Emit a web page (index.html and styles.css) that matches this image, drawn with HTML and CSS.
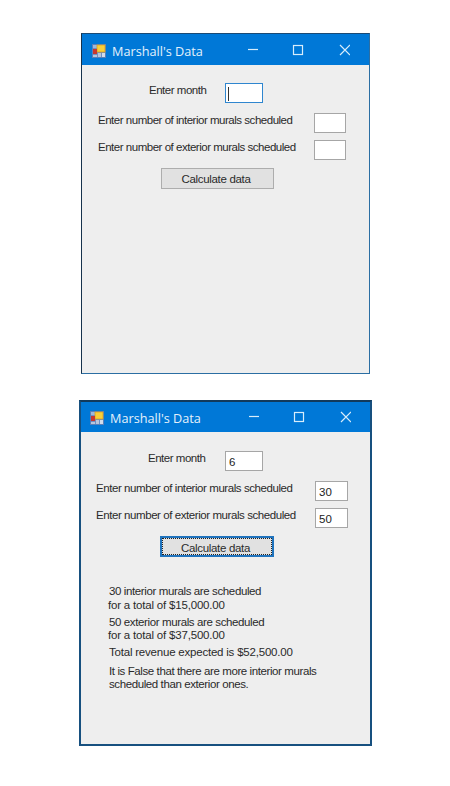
FILE: index.html
```html
<!DOCTYPE html>
<html lang="en">
<head>
<meta charset="utf-8">
<title>Marshall's Data</title>
<link rel="stylesheet" href="styles.css">
</head>
<body>
<section class="window window-empty">
  <header class="titlebar">
    <svg class="app-icon" viewBox="0 0 14 14"><rect x="0.5" y="0.5" width="13" height="13" fill="#6f8fc4" stroke="#5a7fb8"/><rect x="1" y="1" width="4" height="3" fill="#9fb8dc"/><rect x="5" y="1" width="8" height="7" fill="#f9cf3a" stroke="#d59a1b" stroke-width="0.7"/><rect x="1" y="5" width="4" height="5" fill="#c9372f"/><rect x="6" y="9" width="3" height="4" fill="#b9c6dc"/><rect x="10" y="9" width="3" height="4" fill="#d3dcea"/><rect x="1" y="11" width="4" height="2" fill="#b9c6dc"/></svg>
    <span class="title">Marshall's Data</span>
    <svg class="controls" viewBox="0 0 102 12"><path d="M0 5.5H10" /><rect x="45.5" y="1.5" width="9" height="9"/><path d="M92 1L102 11M102 1L92 11"/></svg>
  </header>
  <div class="client">
    <div class="row row-month"><span class="label label-month">Enter month</span><div class="field field-month field-focus"><i class="caret"></i></div></div>
    <div class="row row-interior"><span class="label label-count">Enter number of interior murals scheduled</span><div class="field field-count"></div></div>
    <div class="row row-exterior"><span class="label label-count">Enter number of exterior murals scheduled</span><div class="field field-count"></div></div>
    <div class="button"><span class="button-text">Calculate data</span></div>
  </div>
</section>

<section class="window window-filled">
  <header class="titlebar">
    <svg class="app-icon" viewBox="0 0 14 14"><rect x="0.5" y="0.5" width="13" height="13" fill="#6f8fc4" stroke="#5a7fb8"/><rect x="1" y="1" width="4" height="3" fill="#9fb8dc"/><rect x="5" y="1" width="8" height="7" fill="#f9cf3a" stroke="#d59a1b" stroke-width="0.7"/><rect x="1" y="5" width="4" height="5" fill="#c9372f"/><rect x="6" y="9" width="3" height="4" fill="#b9c6dc"/><rect x="10" y="9" width="3" height="4" fill="#d3dcea"/><rect x="1" y="11" width="4" height="2" fill="#b9c6dc"/></svg>
    <span class="title">Marshall's Data</span>
    <svg class="controls" viewBox="0 0 102 12"><path d="M0 5.5H10" /><rect x="45.5" y="1.5" width="9" height="9"/><path d="M92 1L102 11M102 1L92 11"/></svg>
  </header>
  <div class="client">
    <div class="row row-month"><span class="label label-month">Enter month</span><div class="field field-month">6</div></div>
    <div class="row row-interior"><span class="label label-count">Enter number of interior murals scheduled</span><div class="field field-count">30</div></div>
    <div class="row row-exterior"><span class="label label-count">Enter number of exterior murals scheduled</span><div class="field field-count">50</div></div>
    <div class="button button-default"><span class="button-focus"><span class="button-text">Calculate data</span></span></div>
    <div class="results">
      <p class="result result-first"><span class="line-in">30 interior murals are scheduled</span><br><span class="line-sum">for a total of $15,000.00</span></p>
      <p class="result result-second"><span class="line-in">50 exterior murals are scheduled</span><br><span class="line-sum">for a total of $37,500.00</span></p>
      <p class="result result-total">Total revenue expected is $52,500.00</p>
      <p class="result result-compare">It is False that there are more interior murals<br>scheduled than exterior ones.</p>
    </div>
  </div>
</section>
</body>
</html>
```

FILE: styles.css
```css
* { box-sizing: border-box; }

html, body {
  margin: 0;
  height: 100%;
  background: #fff;
}

body {
  position: relative;
  font-family: "Liberation Sans", Arial, sans-serif;
  font-size: 11.5px;
  line-height: 14px;
  color: #2a2a2a;
  overflow: hidden;
}

.window {
  position: absolute;
  display: flex;
  flex-direction: column;
  border: 1px solid #2b6ea3;
  background: #eeeeee;
}

.window-empty {
  left: 81px;
  top: 33px;
  width: 289px;
  height: 341px;
  border-left-color: #16324c;
  border-top-color: #1a4a75;
  --month-left: 67px;
  --month-label: 76px;
  --count-left: 16px;
  --count-label: 216px;
  --count-spacing: -0.48px;
  --month-width: 38px;
  --count-width: 32px;
  --button-left: 79px;
  --button-width: 113px;
  --button-text-top: 1px;
  --client-top: 18px;
  --icon-left: 10px;
}

.window-filled {
  left: 79px;
  top: 400px;
  width: 293px;
  height: 346px;
  border: 2px solid #17507f;
  border-top-color: #123a5c;
  --month-left: 67px;
  --month-label: 77px;
  --count-left: 15px;
  --count-label: 219px;
  --count-spacing: -0.43px;
  --month-width: 38px;
  --count-width: 33px;
  --button-left: 79px;
  --button-width: 114px;
  --button-text-top: 2px;
  --client-top: 19px;
  --icon-left: 9px;
}

.titlebar {
  display: flex;
  align-items: center;
  flex: none;
  height: 31px;
  padding: 2px 19px 0 var(--icon-left);
  background: #0078d7;
  color: #e4f1fb;
}

.window-filled .titlebar { height: 30px; }

.app-icon {
  flex: none;
  width: 14px;
  height: 14px;
}

.title {
  margin-left: 6px;
  font-family: "Open Sans", "Noto Sans", sans-serif;
  font-size: 12.7px;
  line-height: 16px;
  white-space: nowrap;
}

.controls {
  flex: none;
  width: 102px;
  height: 12px;
  margin-left: auto;
  margin-bottom: 2px;
  fill: none;
  stroke: #d8edfb;
  stroke-width: 1.2;
}

.client {
  display: flex;
  flex-direction: column;
  flex: 1;
  padding-top: var(--client-top);
}

.row {
  display: flex;
  align-items: flex-start;
  flex: none;
}

.row-interior { margin-top: 10px; }
.row-exterior { margin-top: 7px; }

.label {
  flex: none;
  white-space: nowrap;
  letter-spacing: -0.48px;
}

.label-month {
  width: var(--month-label);
  margin-left: var(--month-left);
}

.label-count {
  width: var(--count-label);
  margin-left: var(--count-left);
  letter-spacing: var(--count-spacing);
}

.field {
  position: relative;
  flex: none;
  height: 20px;
  padding: 3px 3px 0;
  background: #fff;
  border: 1px solid #a6a6a6;
  color: #222;
  line-height: 15px;
}

.field-month { width: var(--month-width); }
.field-count { width: var(--count-width); }
.field-focus { border-color: #2f86cf; }

.caret {
  display: block;
  width: 1px;
  height: 14px;
  margin-left: -1px;
  background: #333;
}

.button {
  display: flex;
  align-items: center;
  justify-content: center;
  flex: none;
  width: var(--button-width);
  height: 21px;
  margin: 8px 0 0 var(--button-left);
  background: #e1e1e1;
  border: 1px solid #adadad;
}

.button-text {
  padding: var(--button-text-top) 3px 0 0;
  letter-spacing: -0.33px;
}

.button-default { border: 2px solid #1f73bd; }

.button-focus {
  display: flex;
  align-items: center;
  justify-content: center;
  width: 100%;
  height: 100%;
  outline: 1px dotted #222;
  outline-offset: -1px;
}

.results {
  display: flex;
  flex-direction: column;
  padding: 27px 0 0 27px;
}

.result {
  margin: 3px 0 0;
  white-space: nowrap;
}

.result-first { margin-top: 0; }
.result-second { margin-top: 4px; line-height: 13px; }
.result-total { margin-top: 3px; padding-left: 1px; letter-spacing: -0.21px; }
.result-compare { margin-top: 6px; padding-left: 1px; line-height: 13px; letter-spacing: -0.4px; }
.line-in { padding-left: 1px; letter-spacing: -0.38px; }
.line-sum { letter-spacing: -0.19px; }
```
